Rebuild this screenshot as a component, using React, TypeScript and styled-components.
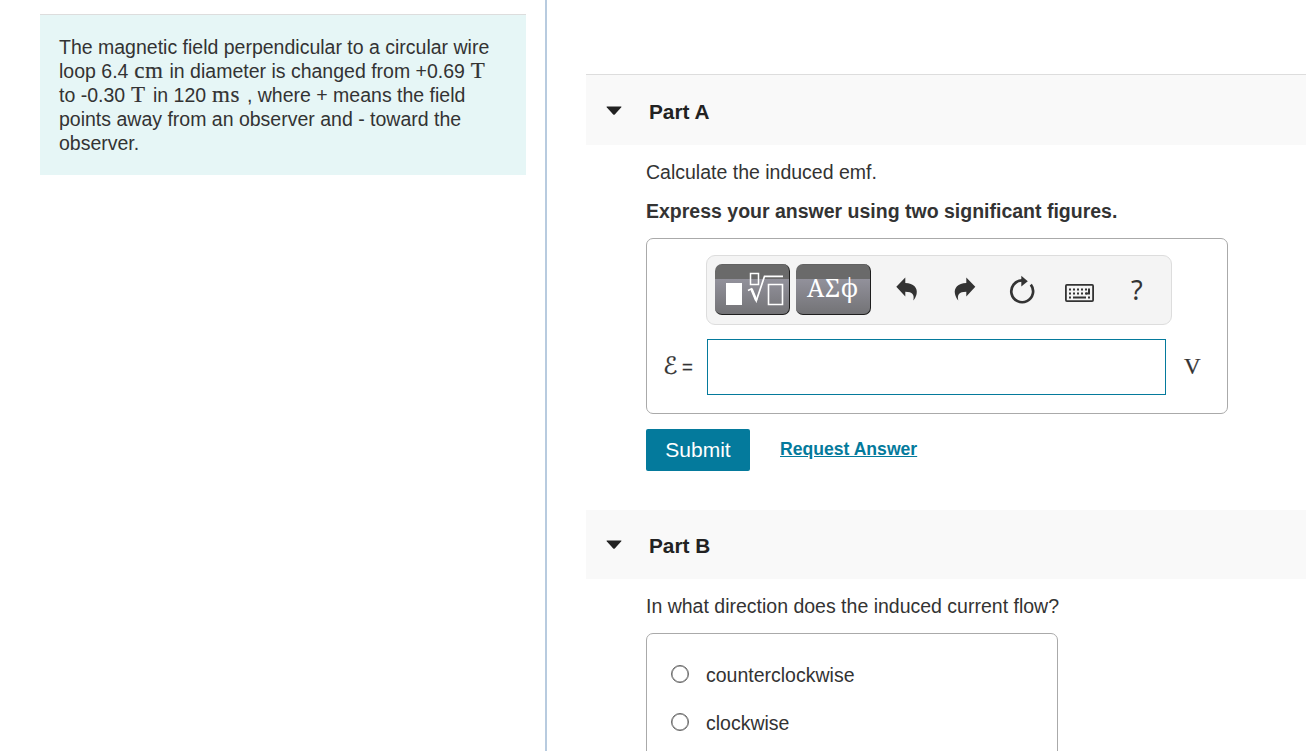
import React from "react";
import styled, { createGlobalStyle } from "styled-components";

const GlobalStyle = createGlobalStyle`
  * { box-sizing: border-box; }
  html, body { margin: 0; background: #fff; overflow: hidden; }
  body { font-family: "Liberation Sans", Arial, sans-serif; font-size: 19.5px; line-height: 24px; color: #333; }
`;

const Page = styled.div`
  display: flex;
  height: 751px;
  overflow: hidden;
`;

const Sidebar = styled.aside`
  flex: 0 0 547px;
  padding: 14px 19px 0 40px;
  border-right: 2px solid #b8cbdf;
`;

const Problem = styled.section`
  height: 161px;
  padding: 20px 19px 0;
  border-top: 1px solid #ddd;
  background: #e6f6f6;
  white-space: nowrap;
`;

const Line = styled.div`
  height: 24px;
`;

const Unit = styled.span<{ $width: number }>`
  display: inline-block;
  width: ${(p) => p.$width}px;
  padding-left: 0.5px;
  line-height: 20px;
  font-family: "Liberation Serif", serif;
  font-size: 23px;
  letter-spacing: 0.5px;
  -webkit-text-stroke: 0.2px #333;
`;

const Main = styled.main`
  flex: 1;
  padding: 74px 0 0 39px;
`;

const PartHeader = styled.header<{ $first?: boolean }>`
  display: flex;
  align-items: center;
  height: ${(p) => (p.$first ? 71 : 69)}px;
  padding: ${(p) => (p.$first ? 4 : 3)}px 0 0 20px;
  border-top: ${(p) => (p.$first ? "1px solid #ddd" : "0")};
  background: #f9f9f9;
`;

const Caret = styled.svg`
  width: 16px;
  height: 9px;
  margin: -4px 27px 0 0;
`;

const PartTitle = styled.h2`
  margin: 0;
  font-size: 20.8px;
  line-height: 24px;
  color: #222;
`;

const PartBody = styled.div`
  padding: 15px 0 0 60px;
`;

const Question = styled.p`
  margin: 0;
`;

const Instruction = styled.p`
  margin: 15px 0;
  font-weight: bold;
`;

const AnswerPanel = styled.div`
  width: 582px;
  height: 176px;
  padding: 16px 0 0 16px;
  border: 1px solid #aaa;
  border-radius: 7px;
`;

const Toolbar = styled.div`
  display: flex;
  gap: 6px;
  width: 466px;
  height: 70px;
  margin-left: 43px;
  padding: 8px;
  border: 1px solid #ddd;
  border-radius: 9px;
  background: #f4f4f4;
`;

const PaletteButton = styled.button`
  display: flex;
  flex: none;
  justify-content: center;
  width: 75px;
  height: 51px;
  padding: 0;
  border: 0;
  border-right: 1px solid #1e1e1e;
  border-bottom: 1px solid #1e1e1e;
  border-radius: 7px;
  background: linear-gradient(#626262 0 1px, #6a6a6a 1px 15px, #92919b 15px, #737376 100%);
  color: #fff;
  font: 24.5px/47px "Noto Serif", "DejaVu Serif Condensed", "DejaVu Serif", serif;
  letter-spacing: 0.9px;
`;

const Tools = styled.div`
  display: flex;
  flex: none;
  padding-left: 2px;
`;

const ToolButton = styled.button`
  flex: none;
  width: 57.3px;
  height: 52px;
  padding: 0;
  border: 0;
  background: none;
  color: #333;
  font: 27px/52px "Noto Sans", sans-serif;

  svg { display: block; }
`;

const EntryRow = styled.label`
  display: flex;
  align-items: center;
  height: 56px;
  margin-top: 14px;
`;

const Symbol = styled.span`
  display: flex;
  align-items: center;
  width: 44px;
  font-size: 18.5px;
  -webkit-text-stroke: 0.25px #333;
`;

const ScriptE = styled.span`
  width: 19px;
  margin-top: -2px;
  font: italic 24px/24px "DejaVu Serif", "DejaVu Sans", serif;
`;

const Entry = styled.input`
  width: 459px;
  height: 56px;
  padding: 0 8px;
  border: 1px solid #047a9c;
  background: #fff;
  font: inherit;
`;

const Volt = styled.span`
  margin: 0 0 0 18px;
  font: 23px/24px "Liberation Serif", serif;
  -webkit-text-stroke: 0.2px #333;
`;

const Actions = styled.div`
  display: flex;
  align-items: center;
  height: 42px;
  margin: 15px 0 39px;
`;

const SubmitButton = styled.button`
  width: 104px;
  height: 42px;
  padding: 0;
  border: 0;
  border-radius: 2px;
  background: #047a9c;
  color: #fff;
  font: 21px "Liberation Sans", Arial, sans-serif;
`;

const RequestLink = styled.a`
  margin: -2px 0 0 30px;
  color: #047a9c;
  font-size: 17.6px;
  font-weight: bold;
  text-decoration: underline;
`;

const Choices = styled.div`
  width: 412px;
  height: 180px;
  margin-top: 15px;
  padding: 29px 0 0 24px;
  border: 1px solid #aaa;
  border-radius: 7px;
`;

const Choice = styled.label`
  display: flex;
  align-items: center;
  height: 24px;
  margin-bottom: 24px;
`;

const RadioInput = styled.input`
  appearance: none;
  width: 18px;
  height: 18px;
  margin: -2px 17px 0 0;
  border: 1px solid #666;
  border-radius: 50%;
  box-shadow: inset 0 0 0 0.5px #767676;
`;

function Header({ title, first }: { title: string; first?: boolean }) {
  return (
    <PartHeader $first={first}>
      <Caret viewBox="0 0 16 9">
        <path d="M1 .5h14q.8 0 .3.7L9 8.2q-1 1-2 0L.7 1.2Q.2.5 1 .5z" fill="#222" />
      </Caret>
      <PartTitle>{title}</PartTitle>
    </PartHeader>
  );
}

function RootIcon() {
  return (
    <svg width="74" height="50" viewBox="0 0 74 50" fill="none" stroke="#fff">
      <path d="M11 19h16v22H11z" fill="#fff" stroke="none" />
      <path d="M35.5 9.5h8v11h-8z" strokeWidth="1.5" />
      <path d="M33 26.5l3.5-1.7 4.8 12L49.5 12.3H68" strokeWidth="1.7" />
      <path d="M36.5 25l4.8 11.5" strokeWidth="2.6" />
      <path d="M53.5 20.5h14v20h-14z" strokeWidth="1.6" />
    </svg>
  );
}

const iconProps = { width: 57, height: 52, viewBox: "0 0 57 52" };

function UndoIcon() {
  return (
    <svg {...iconProps} fill="#333">
      <path d="M17.3 22.8l9-9.3v5.6c8.4 0 12.6 5.2 11.3 10.9-.4 2-1.5 4.3-3.3 6.6 1.3-5.7-.6-8.7-8-8.8v4.6z" />
    </svg>
  );
}

function RedoIcon() {
  return (
    <svg {...iconProps} fill="#333">
      <path d="M39.3 22.8l-9-9.3v5.6c-8.4 0-12.6 5.2-11.3 10.9.4 2 1.5 4.3 3.3 6.6-1.3-5.7.6-8.7 8-8.8v4.6z" />
    </svg>
  );
}

function ResetIcon() {
  return (
    <svg {...iconProps} fill="none">
      <path d="M28 16.4A10.9 10.9 0 1 0 36.8 20.6" stroke="#333" strokeWidth="2.7" />
      <path d="M27.3 11.8l6.5 5.4-6.5 5.2z" fill="#333" />
    </svg>
  );
}

function KeyboardIcon() {
  return (
    <svg {...iconProps} fill="none" stroke="#333">
      <rect x="14.9" y="20.9" width="27.2" height="16.2" rx="1" strokeWidth="1.8" />
      <path d="M18 25.5h18M18 29.5h18" strokeWidth="2" strokeDasharray="2 2" />
      <path d="M38 24.5v5h-3M18 33.5h2M22 33.5h13M37 33.5h2" strokeWidth="2" />
    </svg>
  );
}

export default function App() {
  return (
    <>
      <GlobalStyle />
      <Page>
        <Sidebar>
          <Problem>
            <Line>The magnetic field perpendicular to a circular wire</Line>
            <Line>loop 6.4 <Unit $width={30.3}>cm</Unit> in diameter is changed from +0.69 <Unit $width={17}>T</Unit></Line>
            <Line>to -0.30 <Unit $width={17}>T</Unit> in 120 <Unit $width={30}>ms</Unit> , where + means the field</Line>
            <Line>points away from an observer and - toward the</Line>
            <Line>observer.</Line>
          </Problem>
        </Sidebar>
        <Main>
          <Header title="Part A" first />
          <PartBody>
            <Question>Calculate the induced emf.</Question>
            <Instruction>Express your answer using two significant figures.</Instruction>
            <AnswerPanel>
              <Toolbar>
                <PaletteButton aria-label="Templates"><RootIcon /></PaletteButton>
                <PaletteButton aria-label="Symbols">ΑΣϕ</PaletteButton>
                <Tools>
                  <ToolButton aria-label="Undo"><UndoIcon /></ToolButton>
                  <ToolButton aria-label="Redo"><RedoIcon /></ToolButton>
                  <ToolButton aria-label="Reset"><ResetIcon /></ToolButton>
                  <ToolButton aria-label="Keyboard shortcuts"><KeyboardIcon /></ToolButton>
                  <ToolButton aria-label="Help">?</ToolButton>
                </Tools>
              </Toolbar>
              <EntryRow>
                <Symbol><ScriptE>ℰ</ScriptE>=</Symbol>
                <Entry />
                <Volt>V</Volt>
              </EntryRow>
            </AnswerPanel>
            <Actions>
              <SubmitButton>Submit</SubmitButton>
              <RequestLink>Request Answer</RequestLink>
            </Actions>
          </PartBody>
          <Header title="Part B" />
          <PartBody>
            <Question>In what direction does the induced current flow?</Question>
            <Choices>
              <Choice><RadioInput type="radio" name="direction" />counterclockwise</Choice>
              <Choice><RadioInput type="radio" name="direction" />clockwise</Choice>
            </Choices>
          </PartBody>
        </Main>
      </Page>
    </>
  );
}
